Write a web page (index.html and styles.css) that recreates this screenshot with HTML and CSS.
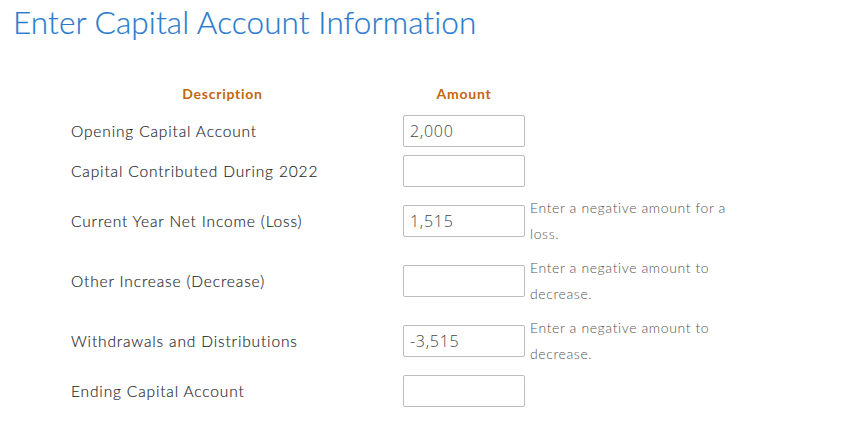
FILE: index.html
```html
<!DOCTYPE html>
<html lang="en">
<head>
<meta charset="utf-8">
<title>Enter Capital Account Information</title>
<link rel="stylesheet" href="styles.css">
</head>
<body>
<main class="page">
  <h1 class="title">Enter Capital Account Information</h1>
  <form class="capital-form">
    <div class="row head-row">
      <div class="head head-desc">Description</div>
      <div class="head head-amount">Amount</div>
      <div></div>
    </div>
    <div class="row">
      <label class="label" for="f1">Opening Capital Account</label>
      <input class="amount" id="f1" type="text" value="2,000">
      <div></div>
    </div>
    <div class="row">
      <label class="label" for="f2">Capital Contributed During 2022</label>
      <input class="amount" id="f2" type="text" value="">
      <div></div>
    </div>
    <div class="row">
      <label class="label" for="f3">Current Year Net Income (Loss)</label>
      <input class="amount" id="f3" type="text" value="1,515">
      <div class="hint">Enter a negative amount for a loss.</div>
    </div>
    <div class="row">
      <label class="label" for="f4">Other Increase (Decrease)</label>
      <input class="amount" id="f4" type="text" value="">
      <div class="hint">Enter a negative amount to decrease.</div>
    </div>
    <div class="row">
      <label class="label" for="f5">Withdrawals and Distributions</label>
      <input class="amount" id="f5" type="text" value="-3,515">
      <div class="hint">Enter a negative amount to decrease.</div>
    </div>
    <div class="row">
      <label class="label" for="f6">Ending Capital Account</label>
      <input class="amount" id="f6" type="text" value="">
      <div></div>
    </div>
  </form>
</main>
</body>
</html>
```

FILE: styles.css
```css
html, body {
  margin: 0;
  padding: 0;
  background: #ffffff;
}

.page {
  padding: 4px 0 0 13px;
}

.title {
  margin: 0;
  font-family: Lato, "Open Sans", sans-serif;
  font-weight: 300;
  font-size: 31.5px;
  letter-spacing: 0.1px;
  line-height: 36px;
  color: #2a7acd;
  -webkit-text-stroke: 0.2px #2a7acd;
}

.capital-form {
  margin: 44px 0 0 58px;
}

.row {
  display: grid;
  grid-template-columns: 327px 122px 212px;
  column-gap: 5px;
  align-items: center;
  padding: 4px 0;
}

.head-row {
  padding: 0 0 7px;
}

.head {
  font-family: Lato, "Open Sans", sans-serif;
  font-weight: 700;
  font-size: 14px;
  letter-spacing: 0.75px;
  line-height: 20px;
  color: #c4650e;
  text-align: center;
}

.head-desc {
  padding-right: 24px;
}

.label {
  font-family: Lato, "Open Sans", sans-serif;
  font-weight: 300;
  font-size: 15.5px;
  letter-spacing: 0.85px;
  color: #26272b;
  -webkit-text-stroke: 0.15px #26272b;
}

.amount {
  box-sizing: border-box;
  width: 122px;
  height: 32px;
  margin: 0;
  padding: 0 6px;
  border: 1px solid #bdbdbd;
  border-radius: 2px;
  font-family: "Open Sans", sans-serif;
  font-weight: 300;
  font-size: 16px;
  letter-spacing: 0.7px;
  color: #444;
  background: #fff;
}

.hint {
  font-family: Lato, "Open Sans", sans-serif;
  font-weight: 300;
  font-size: 14px;
  letter-spacing: 0.6px;
  line-height: 26px;
  color: #555;
}
```
